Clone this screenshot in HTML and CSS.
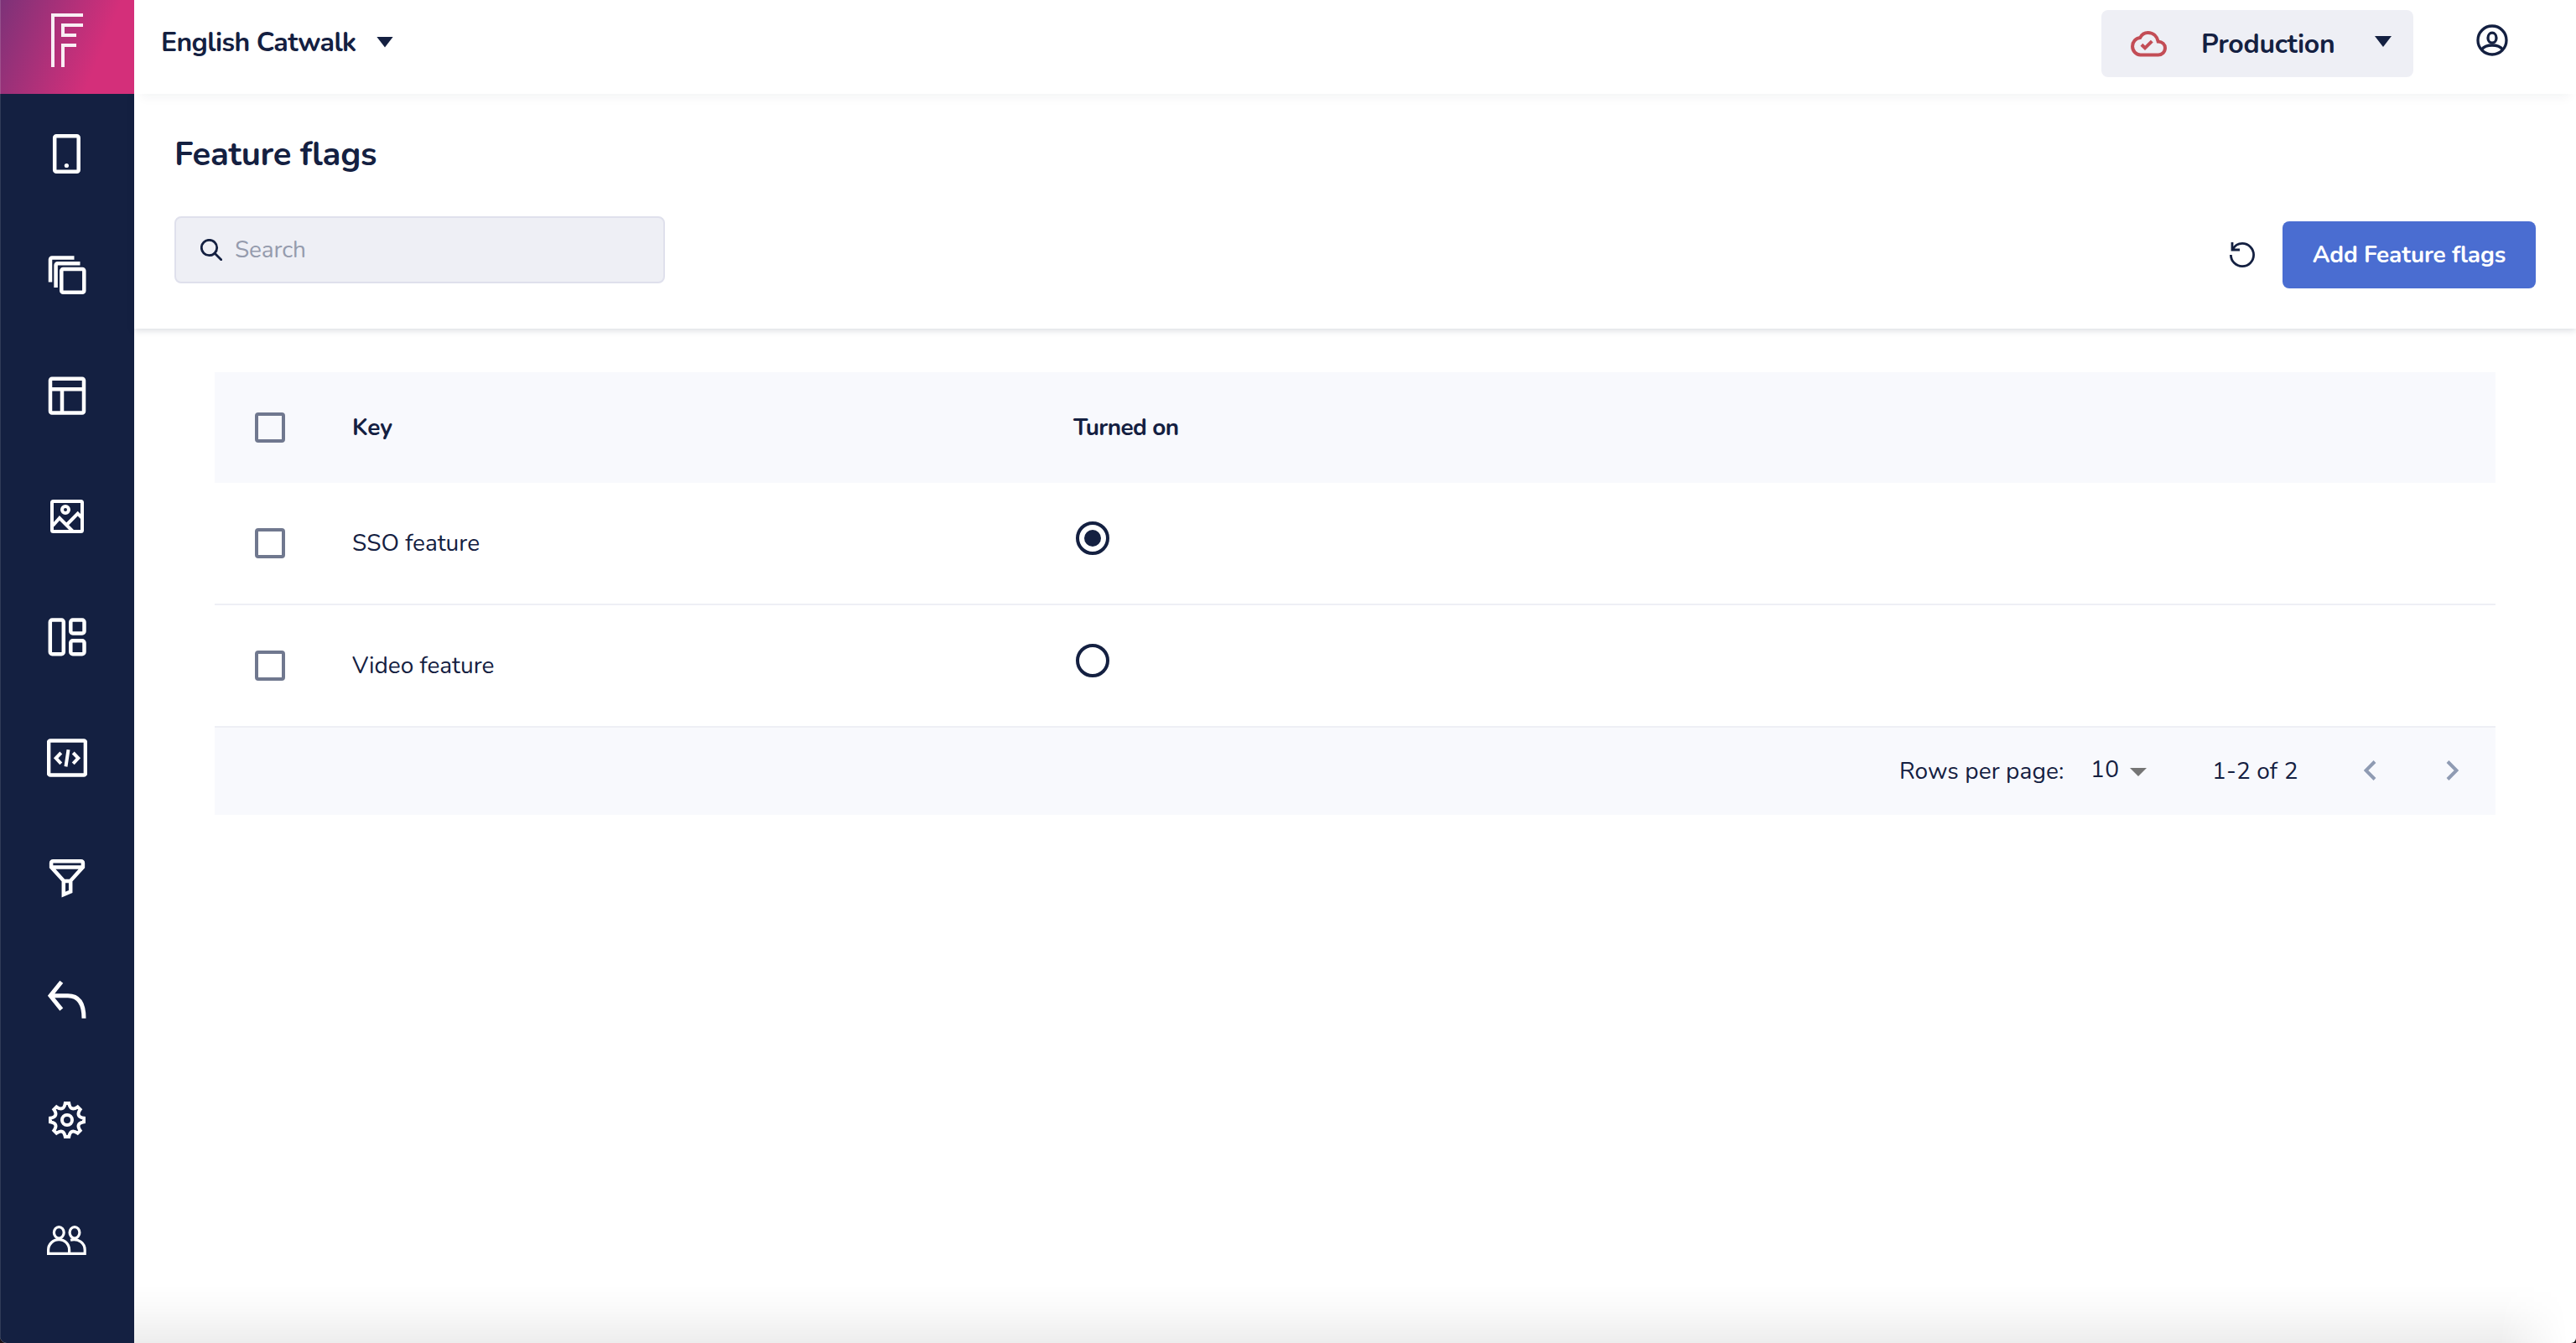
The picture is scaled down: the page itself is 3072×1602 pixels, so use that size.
FILE: index.html
```html
<!DOCTYPE html>
<html lang="en">
<head>
    <meta charset="UTF-8">
    <meta name="viewport" content="width=device-width, initial-scale=1.0">
    <title>Feature flags</title>
    <link rel="stylesheet" href="styles.css">
</head>
<body>
<div class="app">
    <aside class="sidebar">
        <a class="logo" href="#">
            <svg width="38" height="64" viewBox="0 0 38 64">
                <path d="M38 2H2v62M38 14H14v12h16M30 38H14v26"/>
            </svg>
        </a>
        <nav class="menu">
            <!-- apps -->
            <a href="#"><svg viewBox="0 0 48 48"><rect x="9.2" y="2.3" width="28.5" height="42.5" rx="2"/><circle class="dot" cx="23.4" cy="37.5" r="2.6"/></svg></a>
            <!-- pages -->
            <a href="#"><svg viewBox="0 0 48 48"><rect x="17.3" y="17" width="27" height="27.7" rx="2"/><path d="M39.5 10.2H12.6a2 2 0 0 0-2 2V39M32.5 3.5H6a2 2 0 0 0-2 2V32.5"/></svg></a>
            <!-- layouts -->
            <a href="#"><svg viewBox="0 0 48 48"><rect x="4" y="3.7" width="40" height="40.8" rx="2"/><path d="M4 16.3h40M18 16.3v28"/></svg></a>
            <!-- media -->
            <a href="#"><svg class="thin" viewBox="0 0 48 48"><rect x="6" y="6" width="36" height="36" rx="1.5"/><circle cx="22" cy="16" r="4"/><path d="M7 35l8-9 15.5 15.5M24.5 33l12.2-12.5 5.3 5.5"/></svg></a>
            <!-- components -->
            <a href="#"><svg viewBox="0 0 48 48"><rect x="3.8" y="3.6" width="16" height="40.6" rx="2.5"/><rect x="28.3" y="3.6" width="16.2" height="15.8" rx="2.5"/><rect x="28.3" y="28.3" width="16.2" height="15.9" rx="2.5"/></svg></a>
            <!-- code -->
            <a href="#"><svg class="thin" viewBox="0 0 48 48"><rect class="frame" x="2.1" y="3.4" width="43.8" height="41.2" rx="2"/><path d="M16.8 18l-6.1 6.3 6.1 6.5M31.2 18l6.1 6.3-6.1 6.5M25.5 14.2l-3 20.2"/></svg></a>
            <!-- filters -->
            <a href="#"><svg viewBox="0 0 48 48"><path d="M5.1 5.3a2 2 0 0 1 2-2h33.8a2 2 0 0 1 2 2v5L28.2 26.5v13L19.8 43V26.5L5.1 10.3zM5 10.5h38M19.8 27h8.4"/></svg></a>
            <!-- redirects -->
            <a href="#"><svg class="thick" viewBox="0 0 48 48"><path d="M17.3 3.3L4.1 19.7l13.2 16.4M4.1 19.7H25C37 19.7 44 27.5 44 46.7"/></svg></a>
            <!-- settings -->
            <a href="#"><svg class="thin" viewBox="-24 -24 48 48"><circle r="6"/><path d="M2.2-20C3.4-13.2 6.9-11.7 12.6-15.7L15.7-12.6C11.7-6.9 13.2-3.4 20-2.2V2.2C13.2 3.4 11.7 6.9 15.7 12.6L12.6 15.7C6.9 11.7 3.4 13.2 2.2 20H-2.2C-3.4 13.2-6.9 11.7-12.6 15.7L-15.7 12.6C-11.7 6.9-13.2 3.4-20 2.2V-2.2C-13.2-3.4-11.7-6.9-15.7-12.6L-12.6-15.7C-6.9-11.7-3.4-13.2-2.2-20z"/></svg></a>
            <!-- users -->
            <a href="#"><svg class="light" viewBox="0 0 48 48"><ellipse cx="14.3" cy="14.3" rx="5.9" ry="6.7"/><ellipse cx="33" cy="14.3" rx="5.9" ry="6.7"/><path d="M1.6 39.4V35C1.6 28 7.3 22.7 14.2 22.7S26.6 28 26.6 35v4.4zM28 23.2C38 21 45.2 27 45.2 35v4.4H26.6"/></svg></a>
        </nav>
    </aside>

    <main class="main">
        <header class="topbar">
            <div class="project">
                <span>English Catwalk</span>
                <i class="caret"></i>
            </div>
            <div class="environment">
                <svg class="cloud" width="44" height="31" viewBox="0 0 44 31">
                    <path d="M12.5 28.5A10.3 10.3 0 0 1 12.2 8C14 4.3 17.5 2 21.5 2c6.5 0 11 4.5 12.2 10.5 5 .3 8.3 3.7 8.3 7.8a8.2 8.2 0 0 1-8.5 8.2z"/>
                    <path d="M13.9 16.3l4.1 4 8.3-8.2"/>
                </svg>
                <span>Production</span>
                <i class="caret"></i>
            </div>
            <svg class="profile" width="40" height="40" viewBox="0 0 40 40">
                <circle cx="20" cy="20" r="17"/>
                <ellipse cx="20" cy="17.2" rx="5" ry="6"/>
                <path d="M7.5 31c2.5-3.5 7-5 12.5-5s10 1.5 12.5 5"/>
            </svg>
        </header>

        <section class="heading">
            <h1>Feature flags</h1>
            <div class="toolbar">
                <div class="search">
                    <svg width="26" height="26" viewBox="0 0 26 26"><circle cx="10.5" cy="10.5" r="9.2"/><path d="M17 17l7.7 7.7"/></svg>
                    <input type="text" placeholder="Search">
                </div>
                <div class="actions">
                    <svg class="refresh" width="30" height="30" viewBox="0 0 30 30"><path d="M1.4 14.9A13.6 13.6 0 1 0 15 1.4C10.2 1.4 6 4 3.7 8.5M3 0v9h9"/></svg>
                    <button class="add">Add Feature flags</button>
                </div>
            </div>
        </section>

        <section class="table">
            <div class="row head">
                <input type="checkbox">
                <span>Key</span>
                <span class="state">Turned on</span>
            </div>
            <div class="row">
                <input type="checkbox">
                <span>SSO feature</span>
                <input type="radio" checked>
            </div>
            <div class="row">
                <input type="checkbox">
                <span>Video feature</span>
                <input type="radio">
            </div>
            <div class="pagination">
                <span class="label">Rows per page:</span>
                <span class="size">10</span>
                <i class="caret"></i>
                <span class="range">1-2 of 2</span>
                <svg width="15" height="24" viewBox="0 0 15 24"><path d="M13 1.5L2.5 12 13 22.5"/></svg>
                <svg class="next" width="15" height="24" viewBox="0 0 15 24"><path d="M2 1.5L12.5 12 2 22.5"/></svg>
            </div>
        </section>
    </main>
    <div class="shade"></div>
</div>
</body>
</html>
```
FILE: styles.css
```css
* {
    box-sizing: border-box;
}
html {
    background: #1b1216;
}
body {
    margin: 0;
    font-family: Nunito, Lato, sans-serif;
    font-size: 28px;
    color: #142041;
}
svg {
    display: block;
    flex: none;
    fill: none;
    stroke: currentColor;
}
.app {
    position: relative;
    display: flex;
    height: 1602px;
    background: #fff;
    border-radius: 0 0 6px 8px;
    overflow: hidden;
}

/* sidebar */
.sidebar {
    flex: none;
    width: 160px;
    background: #142041;
    color: #fff;
    box-shadow: inset 1px 0 #303b57;
}
.logo {
    display: flex;
    justify-content: center;
    height: 112px;
    padding-top: 16px;
    color: #fff;
    background: linear-gradient(112deg, #7c3278, #d42f7a 71%);
    box-shadow: inset 1px 0 rgba(255, 255, 255, .15);
}
.logo svg {
    stroke-width: 4;
    stroke-opacity: .92;
}
.menu a {
    display: flex;
    align-items: center;
    justify-content: center;
    height: 144px;
    color: #fff;
}
.menu svg {
    width: 48px;
    height: 48px;
    stroke-width: 4.5;
}
.menu .thin {
    stroke-width: 4;
}
.menu .light {
    stroke-width: 3.2;
}
.menu .thick {
    stroke-width: 5;
}
.menu .frame {
    stroke-width: 4.5;
}
.dot {
    fill: #fff;
    stroke: none;
}

/* top bar */
.main {
    flex: 1;
}
.topbar {
    position: relative;
    display: flex;
    align-items: center;
    height: 112px;
    padding: 0 80px 12px 32px;
    font-size: 32px;
    font-weight: 700;
    background: #fff;
    box-shadow: 0 12px 12px -8px rgba(20, 32, 65, .05);
}
.caret {
    flex: none;
    width: 20px;
    height: 13px;
    background: #142041;
    clip-path: polygon(0 0, 100% 0, 50% 100%);
}
.project {
    display: flex;
    align-items: center;
    letter-spacing: -.6px;
}
.project span {
    width: 257px;
}
.environment {
    display: flex;
    align-items: center;
    width: 372px;
    height: 80px;
    margin: 4px 74px 0 auto;
    padding: 0 26px 0 34px;
    background: #eeeff5;
    border-radius: 8px;
}
.environment span {
    flex: 1;
    margin-left: 41px;
    letter-spacing: -.27px;
}
.environment .caret {
    margin-bottom: 5px;
}
.cloud {
    color: #c34d56;
    stroke-width: 4;
}
.profile {
    margin-bottom: 4px;
    stroke-width: 3.3;
}

/* title and search */
.heading {
    height: 280px;
    padding: 48px 48px 0;
    box-shadow: 0 2px 8px rgba(20, 32, 65, .16);
}
h1 {
    margin: 0 0 50px;
    font-size: 40px;
    line-height: 48px;
    letter-spacing: -.25px;
}
.toolbar {
    display: flex;
    justify-content: space-between;
}
.search {
    display: flex;
    align-items: center;
    width: 585px;
    height: 80px;
    padding: 0 28px 0 29px;
    background: #eeeff5;
    border: 2px solid #dfe0ec;
    border-radius: 8px;
}
.search svg {
    stroke-width: 2.8;
    stroke-linecap: round;
}
.search input {
    width: 400px;
    margin-left: 15px;
    padding: 0;
    border: none;
    outline: none;
    background: none;
    font: inherit;
    letter-spacing: -.15px;
}
.search input::placeholder {
    color: #959bad;
}
.actions {
    display: flex;
    align-items: center;
    gap: 33px;
    padding-top: 6px;
}
.refresh {
    stroke-width: 2.8;
}
.add {
    width: 302px;
    height: 80px;
    padding: 0;
    border: none;
    border-radius: 8px;
    background: #4a6dd1;
    color: #fff;
    font: inherit;
    font-weight: 700;
    letter-spacing: -.15px;
    white-space: nowrap;
}

/* table */
.table {
    margin: 52px 96px 0;
}
.row {
    display: grid;
    grid-template-columns: 116px 860px 1fr;
    align-items: center;
    height: 146px;
    padding-left: 48px;
    border-bottom: 2px solid #eeeff5;
}
.head {
    height: 132px;
    border: none;
    background: #f8f9fd;
    font-weight: 700;
}
.head .state {
    letter-spacing: -.6px;
}
input[type="checkbox"] {
    appearance: none;
    width: 36px;
    height: 36px;
    margin: 0;
    border: 4px solid #70788f;
    border-radius: 4px;
}
input[type="radio"] {
    appearance: none;
    width: 40px;
    height: 40px;
    margin: 0 0 12px 3px;
    border: 4px solid #142041;
    border-radius: 50%;
}
input[type="radio"]:checked {
    padding: 6px;
    background: #142041 content-box;
}
.pagination {
    display: flex;
    align-items: center;
    justify-content: flex-end;
    height: 104px;
    padding-right: 44px;
    background: #f8f9fd;
}
.pagination .label {
    width: 228px;
    letter-spacing: .1px;
}
.pagination .size {
    width: 47px;
    padding-bottom: 4px;
    letter-spacing: .5px;
}
.pagination .caret {
    height: 10px;
    margin-top: 2px;
    background: #757575;
}
.pagination .range {
    width: 181px;
    margin-left: 78px;
    letter-spacing: .15px;
}
.pagination svg {
    color: #8f9bb3;
    stroke-width: 4;
    margin-bottom: 2px;
}
.pagination .next {
    margin-left: 83px;
}

/* soft shadow along the bottom edge */
.shade {
    position: absolute;
    left: 160px;
    right: 0;
    bottom: 0;
    height: 70px;
    background: linear-gradient(rgba(0, 0, 0, 0), rgba(0, 0, 0, .015) 35%, rgba(0, 0, 0, .07));
    mask-image: linear-gradient(to left, transparent 10px, #000 90px);
}
```
